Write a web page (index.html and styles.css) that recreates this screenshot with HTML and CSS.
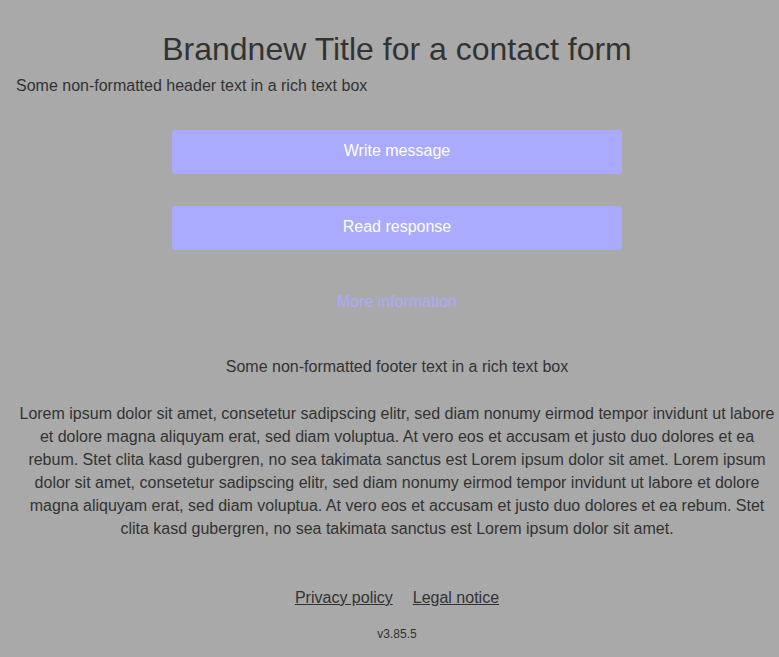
FILE: index.html
```html
<!DOCTYPE html>
<html lang="en">
<head>
<meta charset="utf-8">
<title>Contact form</title>
<link rel="stylesheet" href="styles.css">
</head>
<body>
<div class="page">
  <h1 class="title">Brandnew Title for a contact form</h1>
  <div class="header-text">Some non-formatted header text in a rich text box</div>
  <div class="actions">
    <button class="btn" type="button">Write message</button>
    <button class="btn" type="button">Read response</button>
    <a class="more" href="#">More information</a>
  </div>
  <div class="footer-text">Some non-formatted footer text in a rich text box</div>
  <p class="lorem">Lorem ipsum dolor sit amet, consetetur sadipscing elitr, sed diam nonumy eirmod tempor invidunt ut labore et dolore magna aliquyam erat, sed diam voluptua. At vero eos et accusam et justo duo dolores et ea rebum. Stet clita kasd gubergren, no sea takimata sanctus est Lorem ipsum dolor sit amet. Lorem ipsum dolor sit amet, consetetur sadipscing elitr, sed diam nonumy eirmod tempor invidunt ut labore et dolore magna aliquyam erat, sed diam voluptua. At vero eos et accusam et justo duo dolores et ea rebum. Stet clita kasd gubergren, no sea takimata sanctus est Lorem ipsum dolor sit amet.</p>
  <nav class="legal">
    <a href="#">Privacy policy</a>
    <a href="#">Legal notice</a>
  </nav>
  <div class="version">v3.85.5</div>
</div>
</body>
</html>
```

FILE: styles.css
```css
html, body {
  margin: 0;
  padding: 0;
  background: #a9a9a9;
}
body {
  font-family: "Liberation Sans", Arial, sans-serif;
  color: #333333;
  font-size: 16px;
}
.page {
  padding: 31px 1px 0 16px;
  display: flex;
  flex-direction: column;
}
.title {
  margin: 0;
  font-size: 32px;
  font-weight: normal;
  line-height: 36px;
  text-align: center;
}
.header-text {
  margin-top: 10px;
  line-height: 18px;
}
.actions {
  margin-top: 35px;
  display: flex;
  flex-direction: column;
  align-items: center;
}
.btn {
  width: 450px;
  height: 44px;
  margin-bottom: 32px;
  border: none;
  border-radius: 3px;
  background: #aaaaff;
  color: #ffffff;
  font-family: inherit;
  font-size: 16px;
  padding: 0 0 2px;
  cursor: pointer;
}
.more {
  margin-top: 11px;
  color: #aaaaff;
  text-decoration: none;
  line-height: 18px;
}
.footer-text {
  margin-top: 47px;
  text-align: center;
  line-height: 18px;
}
.lorem {
  margin: 26px 0 0;
  text-align: center;
  line-height: 23px;
}
.legal {
  margin-top: 49px;
  display: flex;
  justify-content: center;
  gap: 20px;
  line-height: 18px;
}
.legal a {
  color: #333333;
}
.version {
  margin-top: 20px;
  text-align: center;
  font-size: 12px;
  line-height: 14px;
}
```
